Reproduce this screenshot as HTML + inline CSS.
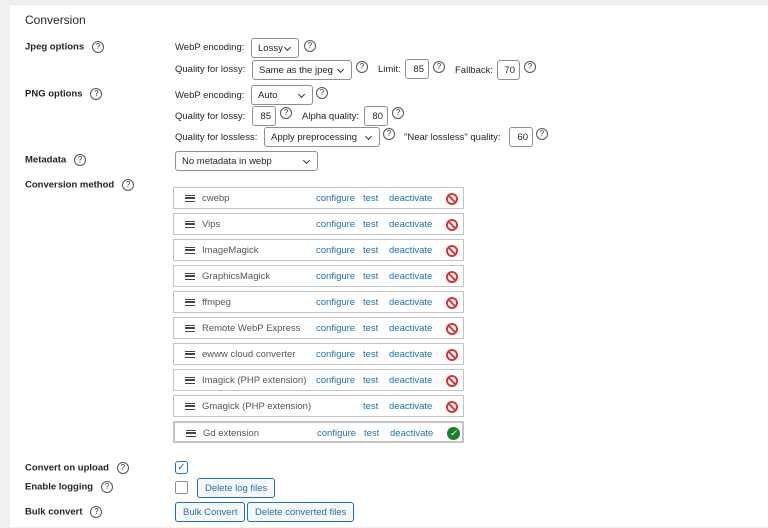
<!DOCTYPE html><html><head><style>
body{margin:0;width:768px;height:528px;background:#f0f0f1;font-family:"Liberation Sans",sans-serif;font-size:9.5px;color:#1d2327;position:relative;overflow:hidden}
.p{position:absolute;left:10px;top:4px;width:758px;height:522px;background:#fff;border-top:1px solid #e4e6ea}
.a{position:absolute;white-space:nowrap}
.l{font-weight:bold;font-size:9.5px}
.q{display:inline-block;width:10px;height:10px;border:1px solid #555;border-radius:50%;font-size:8px;line-height:10px;text-align:center;color:#333;font-weight:normal;vertical-align:middle}
.s,.i{position:absolute;border:1px solid #8c8f94;border-radius:3px;height:20px;box-sizing:border-box;display:flex;align-items:center;padding-left:6px;background:#fff;white-space:nowrap}
.s:after{content:"";position:absolute;right:8px;top:6px;width:4px;height:4px;border-right:1px solid #333;border-bottom:1px solid #333;transform:rotate(45deg)}
.i{padding:0 4px;justify-content:flex-end}
.r{position:absolute;left:173px;width:291px;height:22px;border:1px solid #c3c4c7;box-sizing:border-box;background:#fff;color:#50575e}
.r .h{position:absolute;left:11px;top:7px;width:10px;height:7px;border-top:1.5px solid #444;border-bottom:1.5px solid #444;box-sizing:border-box}
.r .h:after{content:"";position:absolute;left:0;top:1.3px;width:10px;height:1.5px;background:#444}
.r span{position:absolute;top:5px}
.r .c{left:142px;color:#2271b1}.r .t{left:189px;color:#2271b1}.r .d{left:215px;color:#2271b1}
.r .n{left:28px}
.no{position:absolute;left:272px;top:5px;width:8px;height:8px;border:2px solid #d63638;border-radius:50%}
.no:after{content:"";position:absolute;left:3px;top:-1px;width:2px;height:10px;background:#d63638;transform:rotate(-45deg)}
.ok{position:absolute;left:272px;top:4px;width:13px;height:13px;border-radius:50%;background:#1a7f2a;color:#fff;font-size:9px;line-height:13px;text-align:center}
.b{position:absolute;border:1px solid #2271b1;border-radius:3px;height:20px;box-sizing:border-box;display:flex;align-items:center;padding:0 7px;color:#2271b1;background:#f6f7f7;font-size:9.5px;white-space:nowrap}
</style></head><body>
<div class="p"></div>
<div class="a" style="left:25px;top:13px;font-size:12px">Conversion</div>
<div class="a l" style="left:25px;top:41px">Jpeg options &nbsp; <span class="q">?</span></div>
<div class="a" style="left:175px;top:42px">WebP encoding:</div>
<div class="s" style="left:251px;top:38px;width:48px">Lossy</div>
<div class="a" style="left:304px;top:40px"><span class="q">?</span></div>
<div class="a" style="left:175px;top:64px">Quality for lossy:</div>
<div class="s" style="left:252px;top:60px;width:100px">Same as the jpeg</div>
<div class="a" style="left:356px;top:61px"><span class="q">?</span></div>
<div class="a" style="left:378px;top:64px">Limit:</div>
<div class="i" style="left:405px;top:59px;width:24px">85</div>
<div class="a" style="left:433px;top:61px"><span class="q">?</span></div>
<div class="a" style="left:455px;top:65px">Fallback:</div>
<div class="i" style="left:497px;top:60px;width:23px">70</div>
<div class="a" style="left:524px;top:61px"><span class="q">?</span></div>
<div class="a l" style="left:25px;top:88px">PNG options &nbsp; <span class="q">?</span></div>
<div class="a" style="left:175px;top:90px">WebP encoding:</div>
<div class="s" style="left:251px;top:85px;width:62px">Auto</div>
<div class="a" style="left:316px;top:87px"><span class="q">?</span></div>
<div class="a" style="left:175px;top:111px">Quality for lossy:</div>
<div class="i" style="left:252px;top:106px;width:24px">85</div>
<div class="a" style="left:280px;top:107px"><span class="q">?</span></div>
<div class="a" style="left:302px;top:111px">Alpha quality:</div>
<div class="i" style="left:364px;top:106px;width:24px">80</div>
<div class="a" style="left:392px;top:107px"><span class="q">?</span></div>
<div class="a" style="left:175px;top:132px">Quality for lossless:</div>
<div class="s" style="left:264px;top:127px;width:116px">Apply preprocessing</div>
<div class="a" style="left:383px;top:128px"><span class="q">?</span></div>
<div class="a" style="left:404px;top:132px">"Near lossless" quality:</div>
<div class="i" style="left:509px;top:127px;width:24px">60</div>
<div class="a" style="left:536px;top:128px"><span class="q">?</span></div>
<div class="a l" style="left:25px;top:154px">Metadata &nbsp; <span class="q">?</span></div>
<div class="s" style="left:175px;top:151px;width:143px">No metadata in webp</div>
<div class="a l" style="left:25px;top:179px">Conversion method &nbsp; <span class="q">?</span></div>

<div class="r" style="top:187px"><i class="h"></i><span class="n">cwebp</span><span class="c">configure</span><span class="t">test</span><span class="d">deactivate</span><i class="no"></i></div>
<div class="r" style="top:213px"><i class="h"></i><span class="n">Vips</span><span class="c">configure</span><span class="t">test</span><span class="d">deactivate</span><i class="no"></i></div>
<div class="r" style="top:239px"><i class="h"></i><span class="n">ImageMagick</span><span class="c">configure</span><span class="t">test</span><span class="d">deactivate</span><i class="no"></i></div>
<div class="r" style="top:265px"><i class="h"></i><span class="n">GraphicsMagick</span><span class="c">configure</span><span class="t">test</span><span class="d">deactivate</span><i class="no"></i></div>
<div class="r" style="top:291px"><i class="h"></i><span class="n">ffmpeg</span><span class="c">configure</span><span class="t">test</span><span class="d">deactivate</span><i class="no"></i></div>
<div class="r" style="top:317px"><i class="h"></i><span class="n">Remote WebP Express</span><span class="c">configure</span><span class="t">test</span><span class="d">deactivate</span><i class="no"></i></div>
<div class="r" style="top:343px"><i class="h"></i><span class="n">ewww cloud converter</span><span class="c">configure</span><span class="t">test</span><span class="d">deactivate</span><i class="no"></i></div>
<div class="r" style="top:369px"><i class="h"></i><span class="n">Imagick (PHP extension)</span><span class="c">configure</span><span class="t">test</span><span class="d">deactivate</span><i class="no"></i></div>
<div class="r" style="top:395px"><i class="h"></i><span class="n">Gmagick (PHP extension)</span><span class="t">test</span><span class="d">deactivate</span><i class="no"></i></div>
<div class="r" style="top:421px;border:2px solid #c3c4c7"><i class="h"></i><span class="n">Gd extension</span><span class="c">configure</span><span class="t">test</span><span class="d">deactivate</span><i class="ok">✓</i></div>

<div class="a l" style="left:25px;top:462px">Convert on upload &nbsp; <span class="q">?</span></div>
<div class="a" style="left:175px;top:461px;width:11px;height:11px;border:1.5px solid #2271b1;border-radius:3px;color:#2271b1;font-size:10px;line-height:11px;text-align:center">✓</div>
<div class="a l" style="left:25px;top:481px">Enable logging &nbsp; <span class="q">?</span></div>
<div class="a" style="left:175px;top:481px;width:11px;height:11px;border:1px solid #8c8f94;border-radius:2px"></div>
<div class="b" style="left:197px;top:478px">Delete log files</div>
<div class="a l" style="left:25px;top:506px">Bulk convert &nbsp; <span class="q">?</span></div>
<div class="b" style="left:175px;top:502px">Bulk Convert</div>
<div class="b" style="left:247px;top:502px">Delete converted files</div>
</body></html>
